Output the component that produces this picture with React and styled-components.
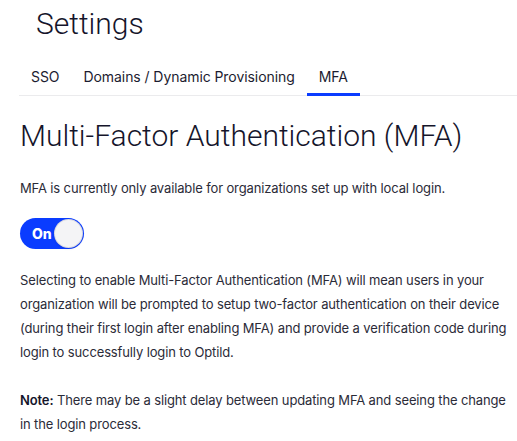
import React, { useState } from 'react';
import styled, { createGlobalStyle } from 'styled-components';

const GlobalStyle = createGlobalStyle`
    body {
        margin: 0;
        background: #fff;
        font-family: Inter, "Noto Sans", sans-serif;
        color: #2b2b38;
    }
`;

const Page = styled.div`
    width: 517px;
    overflow: hidden;
`;

const Title = styled.h1`
    margin: 9px 0 0 36px;
    font-family: Roboto, Inter, sans-serif;
    font-size: 30px;
    line-height: 30px;
    font-weight: 300;
    color: #15152b;
`;

const TabList = styled.div`
    display: flex;
    margin: 20px 0 0 19px;
    border-bottom: 1px solid #ebebed;
`;

const Tab = styled.div`
    padding: 8px 12px 6px;
    margin-bottom: -1px;
    font-size: 14px;
    line-height: 20px;
    letter-spacing: -0.07px;
    color: #1c1c30;
    cursor: pointer;
    border-bottom: 3px solid ${props => (props.active ? '#0a3cff' : 'transparent')};
`;

const Content = styled.div`
    padding: 0 0 0 20px;
`;

const Heading = styled.h2`
    margin: 25px 0 0;
    font-family: Roboto, Inter, sans-serif;
    font-size: 30px;
    line-height: 30px;
    font-weight: 300;
    color: #15152b;
    white-space: nowrap;
`;

const Text = styled.p`
    margin: ${props => props.gap || 0}px 0 0;
    font-size: 13px;
    line-height: 24px;
    letter-spacing: -0.13px;
    color: #2b2b38;

    & strong {
        font-weight: 600;
        color: #15152b;
    }
`;

const Toggle = styled.button`
    display: flex;
    align-items: center;
    justify-content: space-between;
    box-sizing: border-box;
    width: 64px;
    height: 31px;
    margin-top: 18px;
    padding: 0 2px 0 12px;
    border: none;
    border-radius: 16px;
    background: ${props => (props.on ? '#0a3cff' : '#b5b5c0')};
    cursor: pointer;
    font-family: Inter, sans-serif;
`;

const ToggleLabel = styled.span`
    color: #fff;
    font-size: 14px;
    font-weight: 800;
`;

const Knob = styled.span`
    width: 27px;
    height: 27px;
    border-radius: 50%;
    background: #f4f4f6;
    box-shadow: 0 0 0 1px #d8d8e0, 0 1px 3px rgba(0, 0, 40, 0.2);
`;

const tabs = ['SSO', 'Domains / Dynamic Provisioning', 'MFA'];

const App = () => {
    const [on, setOn] = useState(true);
    const [tab, setTab] = useState('MFA');

    return (
        <Page>
            <GlobalStyle />
            <Title>Settings</Title>
            <TabList>
                {tabs.map(t => (
                    <Tab key={t} active={t === tab} onClick={() => setTab(t)}>{t}</Tab>
                ))}
            </TabList>
            <Content>
                <Heading>Multi-Factor Authentication (MFA)</Heading>
                <Text gap={25}>MFA is currently only available for organizations set up with local login.</Text>
                <Toggle on={on} onClick={() => setOn(!on)}>
                    <ToggleLabel>{on ? 'On' : 'Off'}</ToggleLabel>
                    <Knob />
                </Toggle>
                <Text gap={19}>
                    Selecting to enable Multi-Factor Authentication (MFA) will mean users in your organization will be
                    prompted to setup two-factor authentication on their device (during their first login after enabling
                    MFA) and provide a verification code during login to successfully login to Optild.
                </Text>
                <Text gap={24}>
                    <strong>Note:</strong> There may be a slight delay between updating MFA and seeing the change in the
                    login process.
                </Text>
            </Content>
        </Page>
    );
};

export default App;
